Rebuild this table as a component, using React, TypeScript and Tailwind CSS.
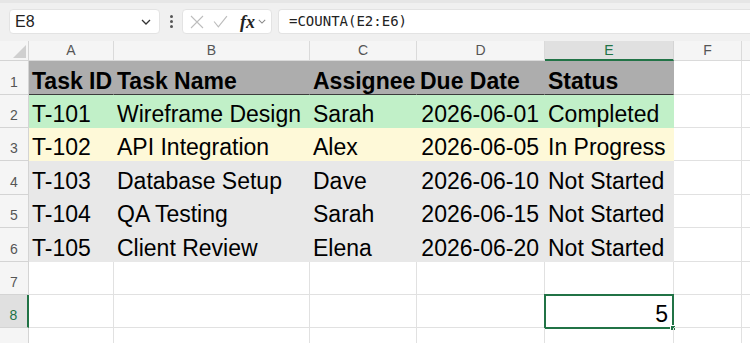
const COLS = ["w-[85px]", "w-[196px]", "w-[107px]", "w-[128px]", "w-[129px]", "w-[68px]"];
const LETTERS = ["A", "B", "C", "D", "E", "F"];

type Row = { n: number; h: string; fill?: string; bold?: boolean; cells: string[] };

const GRAY = "bg-[#e8e8e8] border-[#e8e8e8]";

const rows: Row[] = [
  {
    n: 1,
    h: "h-[34px]",
    fill: "bg-[#adadad] border-r-[#adadad] border-b-[#3c3c3c]",
    bold: true,
    cells: ["Task ID", "Task Name", "Assignee", "Due Date", "Status"],
  },
  { n: 2, h: "h-[33px]", fill: "bg-[#c1f0c8] border-[#c1f0c8]", cells: ["T-101", "Wireframe Design", "Sarah", "2026-06-01", "Completed"] },
  { n: 3, h: "h-[33px]", fill: "bg-[#fef9d8] border-[#fef9d8]", cells: ["T-102", "API Integration", "Alex", "2026-06-05", "In Progress"] },
  { n: 4, h: "h-[34px]", fill: GRAY, cells: ["T-103", "Database Setup", "Dave", "2026-06-10", "Not Started"] },
  { n: 5, h: "h-[33px]", fill: GRAY, cells: ["T-104", "QA Testing", "Sarah", "2026-06-15", "Not Started"] },
  { n: 6, h: "h-[34px]", fill: GRAY, cells: ["T-105", "Client Review", "Elena", "2026-06-20", "Not Started"] },
  { n: 7, h: "h-[33px]", cells: [] },
  { n: 8, h: "h-[33px]", cells: ["", "", "", "", "5"] },
  { n: 9, h: "h-[33px]", cells: [] },
];

function Chevron({ className }: { className: string }) {
  return (
    <svg viewBox="0 0 10 6" className={className} fill="none" stroke="currentColor" strokeWidth="1.3">
      <path d="M1 1l4 4 4-4" />
    </svg>
  );
}

function Toolbar() {
  return (
    <div className="h-[41px] bg-[#f0f0f0] border-t-[3px] border-[#e6e6e6] flex items-start pt-[6px] pl-[9px]">
      <div className="w-[151px] h-[25px] bg-white rounded-[4px] border border-[#e3e3e3] flex items-center pl-[5px] pr-[8px] justify-between">
        <span className="text-[16px] text-[#222]">E8</span>
        <Chevron className="w-[10px] h-[6px] text-[#333]" />
      </div>
      <div className="w-[22px] h-[25px] flex flex-col items-center justify-center gap-[2px]">
        <span className="w-[3px] h-[3px] rounded-full bg-[#555]" />
        <span className="w-[3px] h-[3px] rounded-full bg-[#555]" />
        <span className="w-[3px] h-[3px] rounded-full bg-[#555]" />
      </div>
      <div className="w-[90px] h-[25px] bg-white rounded-[4px] border border-[#e3e3e3] flex items-center pl-[7px] gap-[9px]">
        <svg viewBox="0 0 14 14" className="w-[14px] h-[14px] text-[#bdbdbd]" fill="none" stroke="currentColor" strokeWidth="1.1">
          <path d="M1 1l12 12M13 1L1 13" />
        </svg>
        <svg viewBox="0 0 14 12" className="w-[15px] h-[13px] text-[#bdbdbd]" fill="none" stroke="currentColor" strokeWidth="1.1">
          <path d="M1 6l4 5 8-10" />
        </svg>
        <span className="flex items-center gap-[3px] ml-[3px]">
          <span className="italic font-bold text-[18px] leading-none text-[#222] font-['Liberation_Serif',serif]">fx</span>
          <Chevron className="w-[8px] h-[5px] text-[#888]" />
        </span>
      </div>
      <div className="ml-[6px] flex-1 h-[25px] bg-white rounded-l-[4px] border border-r-0 border-[#e3e3e3] flex items-center pl-[10px]">
        <span className="text-[14px] text-[#222] font-['DejaVu_Sans_Mono',monospace]">=COUNTA(E2:E6)</span>
      </div>
    </div>
  );
}

function ColumnHeader() {
  return (
    <div className="flex h-[20px] bg-[#f5f5f5]">
      <div className="w-[29px] shrink-0 h-full border-r border-b border-[#d4d4d4] relative">
        <svg viewBox="0 0 14 14" className="absolute right-[2px] bottom-[2px] w-[13px] h-[13px]">
          <path d="M14 0V14H0Z" fill="#cfcfcf" />
        </svg>
      </div>
      {LETTERS.map((l, i) =>
        l === "E" ? (
          <div
            key={l}
            className={`${COLS[i]} shrink-0 h-full flex items-center justify-center bg-[#e0e0e0] border-r border-[#d4d4d4] border-b-2 border-b-[#217346] text-[14px] text-[#217346]`}
          >
            {l}
          </div>
        ) : (
          <div
            key={l}
            className={`${COLS[i]} shrink-0 h-full flex items-center justify-center border-r border-b border-[#dadada] text-[14px] text-[#555]`}
          >
            {l}
          </div>
        )
      )}
      <div className="flex-1 h-full border-b border-[#dadada]" />
    </div>
  );
}

export default function App() {
  return (
    <div className="w-[750px] h-[343px] overflow-hidden bg-white font-['Liberation_Sans',Arial,sans-serif]">
      <Toolbar />
      <ColumnHeader />
      {rows.map((r) => (
        <div key={r.n} className={`flex ${r.h}`}>
          {r.n === 8 ? (
            <div className="w-[29px] shrink-0 h-full flex items-end justify-center pb-[4px] bg-[#e0e0e0] border-r-2 border-r-[#217346] border-b border-b-[#d4d4d4] text-[14px] leading-[16px] text-[#217346]">
              {r.n}
            </div>
          ) : (
            <div className="w-[29px] shrink-0 h-full flex items-end justify-center pb-[4px] bg-[#f5f5f5] border-r border-b border-[#d4d4d4] text-[14px] leading-[16px] text-[#555]">
              {r.n < 9 ? r.n : ""}
            </div>
          )}
          {COLS.map((w, i) => {
            const text = r.cells[i] ?? "";
            const filled = r.fill && i < 5;
            const right = (i === 3 && r.n > 1 && r.n < 7) || r.n === 8;
            const selected = r.n === 8 && i === 4;
            return (
              <div
                key={i}
                className={`${w} shrink-0 h-full relative flex items-end whitespace-nowrap border-r border-b text-[23px] leading-[26px] text-black ${
                  filled ? r.fill : "border-[#e1e1e1]"
                } ${right ? "justify-end pr-[5px]" : "pl-[3px]"} ${r.bold ? "font-bold" : ""}`}
              >
                {text}
                {selected && (
                  <>
                    <div className="absolute -left-px -top-px w-[130px] h-[35px] border-2 border-[#217346]" />
                    <div className="absolute right-[-3px] bottom-[-4px] w-[6px] h-[6px] bg-[#217346] border border-white" />
                  </>
                )}
              </div>
            );
          })}
          <div className="flex-1 h-full border-b border-[#e1e1e1]" />
        </div>
      ))}
    </div>
  );
}
